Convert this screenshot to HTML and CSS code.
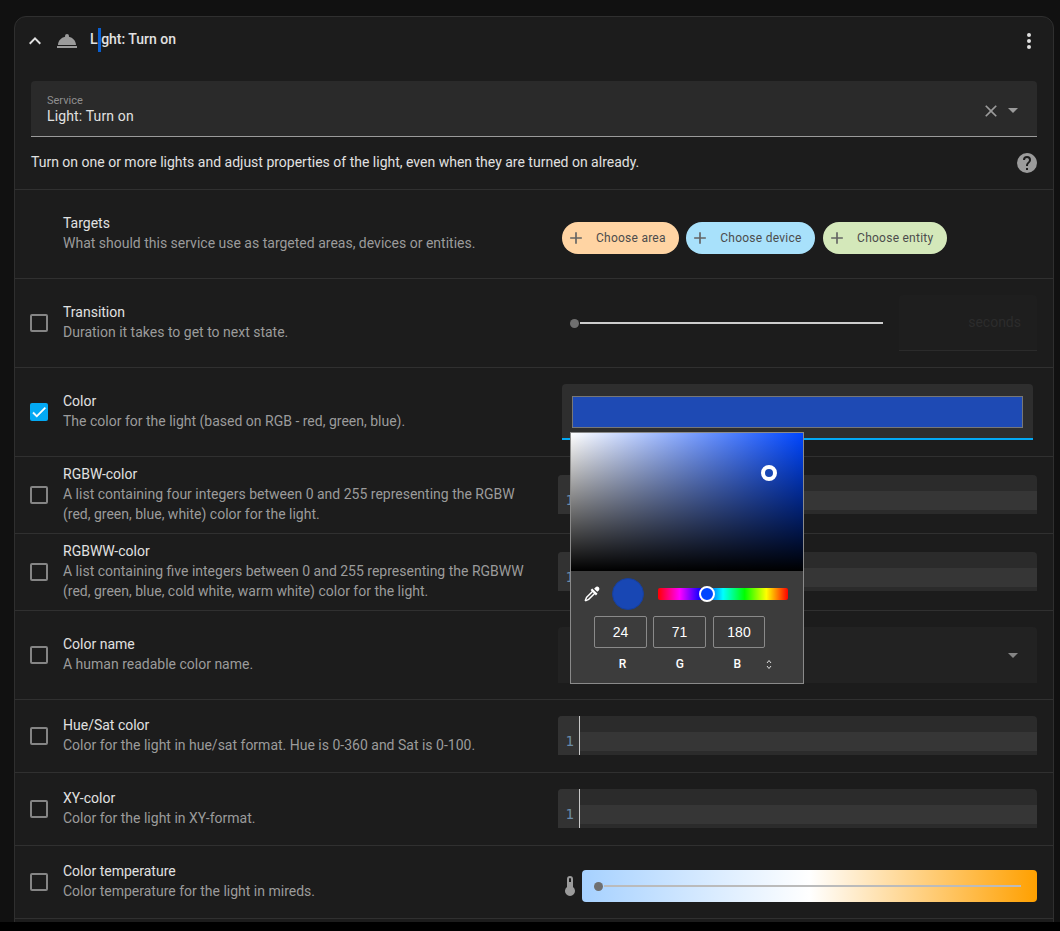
FILE: index.html
```html
<!DOCTYPE html>
<html lang="en">
<head>
<meta charset="utf-8">
<title>Light: Turn on</title>
<link rel="stylesheet" href="styles.css">
</head>
<body>
<div class="page">
<div class="card">

    <div class="head">
        <svg class="icon icon-light" viewBox="0 0 24 24"><path d="M7.41,15.41L12,10.83L16.59,15.41L18,14L12,8L6,14L7.41,15.41Z"/></svg>
        <svg class="icon icon-gray head-action" viewBox="0 0 24 24"><path d="M12,5A2,2 0 0,1 14,7C14,7.24 13.96,7.47 13.88,7.69C17.95,8.5 21,11.91 21,16H3C3,11.91 6.05,8.5 10.12,7.69C10.04,7.47 10,7.24 10,7A2,2 0 0,1 12,5M22,19H2V17H22V19Z"/></svg>
        <div class="head-title"><span class="caret"></span>Light: Turn on</div>
        <svg class="icon icon-light" viewBox="0 0 24 24"><path d="M12,16A2,2 0 0,1 14,18A2,2 0 0,1 12,20A2,2 0 0,1 10,18A2,2 0 0,1 12,16M12,10A2,2 0 0,1 14,12A2,2 0 0,1 12,14A2,2 0 0,1 10,12A2,2 0 0,1 12,10M12,4A2,2 0 0,1 14,6A2,2 0 0,1 12,8A2,2 0 0,1 10,6A2,2 0 0,1 12,4Z"/></svg>
    </div>

    <div class="service">
        <div class="service-text">
            <div class="service-label">Service</div>
            <div class="service-value">Light: Turn on</div>
        </div>
        <svg class="close icon-gray" viewBox="0 0 24 24"><path d="M19,6.41L17.59,5L12,10.59L6.41,5L5,6.41L10.59,12L5,17.59L6.41,19L12,13.41L17.59,19L19,17.59L13.41,12L19,6.41Z"/></svg>
        <svg class="icon icon-gray" viewBox="0 0 24 24"><path d="M7,10L12,15L17,10H7Z"/></svg>
    </div>

    <div class="intro">
        <span class="intro-text">Turn on one or more lights and adjust properties of the light, even when they are turned on already.</span>
        <svg class="icon icon-gray" viewBox="0 0 24 24"><path d="M15.07,11.25L14.17,12.17C13.45,12.89 13,13.5 13,15H11V14.5C11,13.39 11.45,12.39 12.17,11.67L13.41,10.41C13.78,10.05 14,9.55 14,9C14,7.89 13.1,7 12,7A2,2 0 0,0 10,9H8A4,4 0 0,1 12,5A4,4 0 0,1 16,9C16,9.88 15.64,10.67 15.07,11.25M13,19H11V17H13M12,2A10,10 0 0,0 2,12A10,10 0 0,0 12,22A10,10 0 0,0 22,12C22,6.47 17.5,2 12,2Z"/></svg>
    </div>

    <div class="row">
        <div class="check-space"></div>
        <div class="row-text">
            <div class="row-title">Targets</div>
            <div class="row-desc">What should this service use as targeted areas, devices or entities.</div>
        </div>
        <div class="sel sel-pills">
            <div class="pill pill-area"><svg class="pill-plus" viewBox="0 0 24 24"><path d="M19,13H13V19H11V13H5V11H11V5H13V11H19V13Z"/></svg>Choose area</div>
            <div class="pill pill-device"><svg class="pill-plus" viewBox="0 0 24 24"><path d="M19,13H13V19H11V13H5V11H11V5H13V11H19V13Z"/></svg>Choose device</div>
            <div class="pill pill-entity"><svg class="pill-plus" viewBox="0 0 24 24"><path d="M19,13H13V19H11V13H5V11H11V5H13V11H19V13Z"/></svg>Choose entity</div>
        </div>
    </div>

    <div class="row">
        <div class="check"></div>
        <div class="row-text">
            <div class="row-title">Transition</div>
            <div class="row-desc">Duration it takes to get to next state.</div>
        </div>
        <div class="sel sel-slider">
            <div class="slider">
                <span class="thumb"></span>
                <span class="track"></span>
            </div>
            <div class="seconds">seconds</div>
        </div>
    </div>

    <div class="row">
        <div class="check check-on"><svg viewBox="0 0 24 24"><path d="M21,7L9,19L3.5,13.5L4.91,12.09L9,16.17L19.59,5.59L21,7Z"/></svg></div>
        <div class="row-text">
            <div class="row-title">Color</div>
            <div class="row-desc">The color for the light (based on RGB - red, green, blue).</div>
        </div>
        <div class="sel">
            <div class="color-field">
                <div class="swatch"></div>
                <div class="picker">
                    <div class="picker-area"><span class="picker-dot"></span></div>
                    <div class="picker-tools">
                        <svg class="dropper" viewBox="0 0 24 24"><path d="M19.35,11.72L17.22,13.85L15.81,12.43L8.1,20.14L3.5,22L2,20.5L3.86,15.9L11.57,8.19L10.15,6.78L12.28,4.65L19.35,11.72M16.76,3C17.93,1.83 19.83,1.83 21,3C22.17,4.17 22.17,6.07 21,7.24L19.08,9.16L14.84,4.92L16.76,3M5.56,17.03L4.5,19.5L6.97,18.44L14.4,11L13,9.6L5.56,17.03Z"/></svg>
                        <span class="preview"></span>
                        <div class="hue"><span class="hue-thumb"></span></div>
                    </div>
                    <div class="picker-values">
                        <span class="value">24</span>
                        <span class="value">71</span>
                        <span class="value value-last">180</span>
                    </div>
                    <div class="picker-labels">
                        <span>R</span>
                        <span>G</span>
                        <span>B</span>
                        <svg class="stepper" viewBox="0 0 6 9"><path d="M3 .5L1 3M3 .5L5 3M3 8.5L1 6M3 8.5L5 6"/></svg>
                    </div>
                </div>
            </div>
        </div>
    </div>

    <div class="row">
        <div class="check"></div>
        <div class="row-text">
            <div class="row-title">RGBW-color</div>
            <div class="row-desc">A list containing four integers between 0 and 255 representing the RGBW (red, green, blue, white) color for the light.</div>
        </div>
        <div class="sel">
            <div class="editor"><div class="gutter">1</div><div class="lines"><div class="line"></div></div></div>
        </div>
    </div>

    <div class="row">
        <div class="check"></div>
        <div class="row-text">
            <div class="row-title">RGBWW-color</div>
            <div class="row-desc">A list containing five integers between 0 and 255 representing the RGBWW (red, green, blue, cold white, warm white) color for the light.</div>
        </div>
        <div class="sel">
            <div class="editor"><div class="gutter">1</div><div class="lines"><div class="line"></div></div></div>
        </div>
    </div>

    <div class="row">
        <div class="check"></div>
        <div class="row-text">
            <div class="row-title">Color name</div>
            <div class="row-desc">A human readable color name.</div>
        </div>
        <div class="sel">
            <div class="select-field"><svg class="icon icon-dim" viewBox="0 0 24 24"><path d="M7,10L12,15L17,10H7Z"/></svg></div>
        </div>
    </div>

    <div class="row">
        <div class="check"></div>
        <div class="row-text">
            <div class="row-title">Hue/Sat color</div>
            <div class="row-desc">Color for the light in hue/sat format. Hue is 0-360 and Sat is 0-100.</div>
        </div>
        <div class="sel">
            <div class="editor"><div class="gutter">1</div><div class="lines"><div class="line"></div></div></div>
        </div>
    </div>

    <div class="row">
        <div class="check"></div>
        <div class="row-text">
            <div class="row-title">XY-color</div>
            <div class="row-desc">Color for the light in XY-format.</div>
        </div>
        <div class="sel">
            <div class="editor"><div class="gutter">1</div><div class="lines"><div class="line"></div></div></div>
        </div>
    </div>

    <div class="row">
        <div class="check"></div>
        <div class="row-text">
            <div class="row-title">Color temperature</div>
            <div class="row-desc">Color temperature for the light in mireds.</div>
        </div>
        <div class="sel sel-temp">
            <svg class="icon icon-gray" viewBox="0 0 24 24"><path d="M15 13V5A3 3 0 0 0 9 5V13A5 5 0 1 0 15 13M12 4A1 1 0 0 1 13 5V8H11V5A1 1 0 0 1 12 4Z"/></svg>
            <div class="temp-bar">
                <span class="thumb"></span>
                <span class="temp-track"></span>
            </div>
        </div>
    </div>

</div>
</div>
</body>
</html>
```

FILE: styles.css
```css
html, body { margin: 0; padding: 0; background: #000; }
body { font-family: Roboto, "Liberation Sans", sans-serif; font-size: 14px; line-height: 20px; color: #e1e1e1; }

.page { height: 922px; padding: 16px 6px 0 14px; box-sizing: border-box; overflow: hidden; background: #111; }
.card { padding-bottom: 40px; background: #1c1c1c; border: 1px solid #2f2f2f; border-radius: 12px; }

.icon { display: block; width: 24px; height: 24px; flex: none; }
.icon-light { fill: #e1e1e1; }
.icon-gray { fill: #9b9b9b; }
.icon-dim { fill: #858585; }

/* header */
.head { display: flex; align-items: center; height: 48px; padding: 0 12px 0 8px; }
.head-action { margin-left: 8px; }
.head-title { position: relative; flex: 1; margin: -4px 0 0 11px; font-weight: 500; }
.caret { position: absolute; left: 8px; top: -1px; width: 3px; height: 24px; background: #0a5fd0; }

/* service select */
.service { display: flex; align-items: center; height: 56px; box-sizing: border-box; margin: 16px 16px 0; padding: 3px 12px 0 16px; background: #2a2a2a; border-bottom: 1px solid #9b9b9b; border-radius: 4px 4px 0 0; }
.service-text { flex: 1; margin-top: -2px; }
.service-label { margin: 2px 0 -2px; font-size: 11px; line-height: 14px; color: #8f8f8f; }
.service-value { line-height: 20px; letter-spacing: 0.15px; }
.close { display: block; flex: none; width: 20px; height: 20px; margin-top: 1px; }

.intro { display: flex; align-items: center; justify-content: space-between; height: 53px; box-sizing: border-box; padding: 0 14px 0 16px; border-bottom: 1px solid #303030; }
.intro-text { margin-bottom: 2px; }

/* rows */
.row { display: flex; align-items: center; padding: 8px 16px 8px 15px; border-bottom: 1px solid #303030; }
.check, .check-space { flex: none; width: 18px; height: 18px; margin-right: 15px; box-sizing: border-box; }
.check { border: 2px solid #858585; border-radius: 2px; }
.check-on { border: 0; background: #03a9f4; }
.check-on svg { display: block; width: 18px; height: 18px; fill: #fff; stroke: #fff; stroke-width: 0.6; }
.row-text { flex: none; width: 480px; margin: -1px 15px 1px 0; }
.row-desc { color: #9b9b9b; }
.sel { flex: 1; min-width: 0; margin: 8px 0; }

/* target pills */
.sel-pills { display: flex; align-items: center; gap: 7px; height: 56px; box-sizing: border-box; padding: 8px 0 0 4px; }
.pill { display: flex; align-items: center; height: 32px; padding: 0 13.5px 0 4px; border-radius: 16px; font-size: 12px; letter-spacing: 0.25px; color: #4c4c4c; }
.pill-plus { width: 20px; height: 20px; margin-right: 10px; fill: #646464; }
.pill-area { background: #ffd4a3; }
.pill-device { background: #a8e1fb; }
.pill-entity { margin-left: 1px; background: #d4e8ba; }

/* transition slider */
.sel-slider { display: flex; align-items: center; height: 56px; }
.slider { display: flex; align-items: center; width: 325px; box-sizing: border-box; padding-left: 12px; }
.thumb { display: block; flex: none; width: 9px; height: 9px; border-radius: 50%; background: #6f6f6f; }
.track { display: block; flex: 1; height: 2px; margin-left: 1px; background: #ccc; }
.seconds { flex: none; width: 138px; height: 56px; margin-left: 16px; box-sizing: border-box; padding: 17px 16px 0 0; text-align: right; color: #2c2c2c; background: #1e1e1e; border-bottom: 1px solid #2b2b2b; border-radius: 4px 4px 0 0; }

/* color input */
.color-field { position: relative; height: 56px; box-sizing: border-box; margin: 0 4px; padding: 12px 10px 0; background: #2e2e2e; border-bottom: 2px solid #03a9f4; border-radius: 4px 4px 0 0; }
.swatch { height: 32px; box-sizing: border-box; background: #1e4ab4; border: 1px solid #777; }

/* native color popup */
.picker { position: absolute; left: 8px; top: 48px; z-index: 5; width: 234px; height: 252px; box-sizing: border-box; background: #3c3c3c; border: 1px solid #8a8a8a; font-family: "Liberation Sans", Arial, sans-serif; color: #fff; }
.picker-area { position: relative; height: 138px; background: linear-gradient(to top, #000, rgba(0, 0, 0, 0)), linear-gradient(to right, #fff, #0046ff); }
.picker-dot { position: absolute; left: 190px; top: 32px; width: 16px; height: 16px; box-sizing: border-box; border: 4px solid #fff; border-radius: 50%; background: #1847b4; }
.picker-tools { display: flex; align-items: center; padding: 7px 0 0 12px; }
.dropper { width: 18px; height: 18px; fill: #fff; }
.preview { width: 32px; height: 32px; box-sizing: border-box; margin-left: 11px; border: 1px solid #173f9c; border-radius: 50%; background: #1847b4; }
.hue { position: relative; width: 130px; height: 12px; margin-left: 14px; border-radius: 2px; background: linear-gradient(to right, #f00, #f0f, #00f, #0ff, #0f0, #ff0, #f00); }
.hue-thumb { position: absolute; left: 41px; top: -2px; width: 16px; height: 16px; box-sizing: border-box; border: 2px solid #fff; border-radius: 50%; background: #0046ff; }
.picker-values { display: flex; gap: 6px; padding: 6px 0 0 23px; }
.value { width: 53px; height: 32px; box-sizing: border-box; border: 1px solid #8a8a8a; border-radius: 2px; text-align: center; font-size: 14px; line-height: 30px; }
.value-last { width: 52px; margin-left: 1px; }
.picker-labels { display: flex; align-items: center; gap: 6px; padding: 8px 0 0 26px; font-family: Roboto, sans-serif; font-size: 12px; font-weight: 500; line-height: 16px; }
.picker-labels span { width: 51.3px; text-align: center; }
.stepper { width: 6px; height: 9px; margin-left: -3px; fill: none; stroke: #ddd; stroke-width: 1; }

/* code editor */
.editor { display: flex; height: 39px; margin-bottom: 1px; background: #2b2b2b; border-radius: 4px 4px 0 0; overflow: hidden; }
.gutter { flex: none; width: 22px; box-sizing: border-box; padding: 16px 5px 0 0; text-align: right; font-family: "DejaVu Sans Mono", monospace; font-size: 14px; line-height: 19px; color: #6a8caa; background: #323232; border-right: 1px solid #c8c8c8; }
.lines { flex: 1; padding-top: 16px; }
.line { height: 19px; background: #363636; }

.select-field { display: flex; align-items: center; justify-content: flex-end; height: 56px; box-sizing: border-box; padding-right: 12px; background: #222; border-radius: 4px 4px 0 0; }

/* color temperature */
.sel-temp { display: flex; align-items: center; height: 40px; padding-top: 8px; box-sizing: border-box; }
.temp-bar { display: flex; align-items: center; flex: 1; height: 32px; padding: 0 16px 0 12px; border-radius: 4px; background: linear-gradient(to right, #a6d1ff, #fff 50%, #ffa000); }
.temp-track { display: block; flex: 1; height: 2px; margin-left: 1px; background: #bbb; }
```
